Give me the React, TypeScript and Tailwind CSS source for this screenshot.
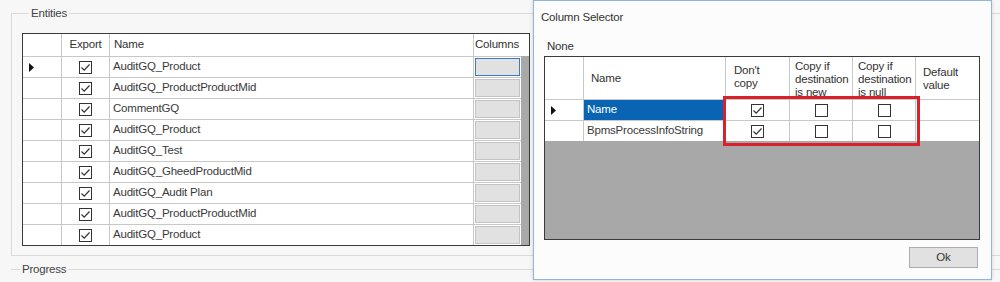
import React from 'react';

const font = { fontFamily: '"Liberation Sans", Arial, sans-serif', letterSpacing: '-0.2px' };

function CheckBox({ checked }: { checked: boolean }) {
    return (
        <svg width="13" height="13" viewBox="0 0 13 13">
            <rect x="0.5" y="0.5" width="12" height="12" fill="#fff" stroke="#333" />
            {checked && <path d="M2.5 6.5 L5.2 9.2 L10.5 3.5" fill="none" stroke="#333" strokeWidth="1.2" />}
        </svg>
    );
}

function RowArrow() {
    return (
        <svg width="5" height="9" viewBox="0 0 5 9">
            <path d="M0 0 L5 4.5 L0 9 Z" fill="#111" />
        </svg>
    );
}

const entities = [
    'AuditGQ_Product',
    'AuditGQ_ProductProductMid',
    'CommentGQ',
    'AuditGQ_Product',
    'AuditGQ_Test',
    'AuditGQ_GheedProductMid',
    'AuditGQ_Audit Plan',
    'AuditGQ_ProductProductMid',
    'AuditGQ_Product',
];

const columns = [
    { name: 'Name', selected: true },
    { name: 'BpmsProcessInfoString', selected: false },
];

export default function App() {
    return (
        <div className="relative w-[1000px] h-[282px] overflow-hidden bg-[#f7f7f7] text-[11.5px] text-[#333]" style={font}>
            {/* 메인 창 */}
            <div className="pl-[11px] pt-[6px]">
                <fieldset className="border border-[#dadada] w-[1000px] h-[250px] pl-[10px] pt-[13px] m-0">
                    <legend className="px-[2px] ml-[7px] text-[#444] leading-[14px]">Entities</legend>
                    <div className="w-[508px] border border-[#3a3a3a] bg-[#a9a9a9] flex flex-col">
                        <div className="flex h-[22px] bg-white">
                            <div className="w-[39px] border-r border-[#c8c8c8]" />
                            <div className="w-[48px] border-r border-[#c8c8c8] flex items-center justify-center">Export</div>
                            <div className="w-[364px] border-r border-[#c8c8c8] flex items-center pl-[4px]">Name</div>
                            <div className="w-[47px] flex items-center justify-end pr-[2px]">Columns</div>
                        </div>
                        {entities.map((e, i) => (
                            <div key={i} className="flex h-[21px]">
                                <div className="w-[39px] bg-white border-r border-t border-[#c8c8c8] flex items-center pl-[6px]">
                                    {i === 0 && <RowArrow />}
                                </div>
                                <div className="w-[48px] bg-white border-r border-t border-[#c8c8c8] flex items-center justify-center">
                                    <CheckBox checked />
                                </div>
                                <div className="w-[364px] bg-white border-r border-t border-[#c8c8c8] flex items-center pl-[3px] text-[#3a3a3a]">{e}</div>
                                <div className="w-[47px] bg-white border-t border-[#c8c8c8] flex items-center justify-center">
                                    <div className={`w-[45px] h-[18px] bg-[#e1e1e1] border ${i === 0 ? 'border-[#3b7bbf]' : 'border-[#c4c4c4]'}`} />
                                </div>
                            </div>
                        ))}
                    </div>
                </fieldset>
                <fieldset className="border-t border-[#dadada] w-[1000px] mt-[6px] m-0 pl-[10px]">
                    <legend className="px-[2px] ml-[-1px] text-[#444] leading-[14px]">Progress</legend>
                </fieldset>
            </div>

            {/* Column Selector 창 */}
            <div className="absolute left-[533px] top-0 w-[459px] h-[280px] bg-[#fcfcfc] border border-[#8fb4de] shadow-[0_0_4px_rgba(0,0,0,0.15)]">
                <div className="pl-[7px] pt-[8px] leading-[16px] text-[#333]">Column Selector</div>
                <div className="pl-[13px] pt-[13px] leading-[16px] text-[#333]">None</div>
                <div className="ml-[10px] mt-[2px] w-[436px] h-[184px] border border-[#3a3a3a] bg-[#a8a8a8] flex flex-col">
                    <div className="flex h-[42px] bg-white leading-[13px]">
                        <div className="w-[39px] border-r border-[#c8c8c8]" />
                        <div className="w-[142px] border-r border-[#c8c8c8] flex items-center pl-[7px]">Name</div>
                        <div className="w-[64px] border-r border-[#c8c8c8] pl-[8px] pt-[7px]">Don't<br />copy</div>
                        <div className="w-[63px] border-r border-[#c8c8c8] pl-[5px] pt-[3px]">Copy if<br />destination<br />is new</div>
                        <div className="w-[63px] border-r border-[#c8c8c8] pl-[5px] pt-[3px]">Copy if<br />destination<br />is null</div>
                        <div className="flex-1 pl-[7px] pt-[9px]">Default<br />value</div>
                    </div>
                    {columns.map((c, i) => (
                        <div key={i} className="flex h-[21px]">
                            <div className="w-[39px] bg-white border-r border-t border-[#c8c8c8] flex items-center pl-[6px]">
                                {i === 0 && <RowArrow />}
                            </div>
                            <div className={`w-[142px] border-r border-t border-[#c8c8c8] flex items-center pl-[3px] ${c.selected ? 'bg-[#0a64b4] text-white' : 'bg-white text-[#3a3a3a]'}`}>{c.name}</div>
                            <div className="w-[64px] bg-white border-r border-t border-[#c8c8c8] flex items-center justify-center"><CheckBox checked /></div>
                            <div className="w-[63px] bg-white border-r border-t border-[#c8c8c8] flex items-center justify-center"><CheckBox checked={false} /></div>
                            <div className="w-[63px] bg-white border-r border-t border-[#c8c8c8] flex items-center justify-center"><CheckBox checked={false} /></div>
                            <div className="flex-1 bg-white border-t border-[#c8c8c8]" />
                        </div>
                    ))}
                </div>
                <div className="flex justify-end pr-[13px] pt-[7px]">
                    <button className="w-[69px] h-[21px] bg-[#e1e1e1] border border-[#adadad] text-[#333] leading-none">Ok</button>
                </div>

                {/* 강조 표시 */}
                <div className="absolute left-[189px] top-[95px] w-[197px] h-[50px] border-[3px] border-[#d9212b]" />
            </div>
        </div>
    );
}
